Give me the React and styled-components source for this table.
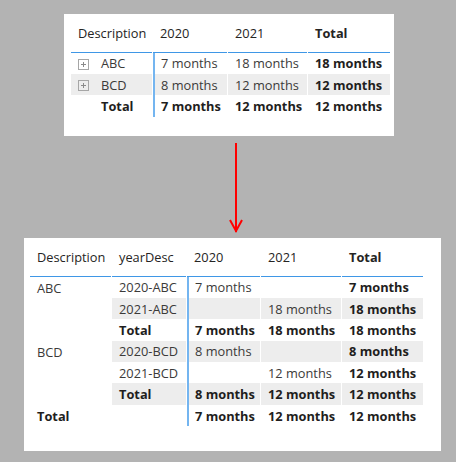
import styled, { createGlobalStyle } from 'styled-components';

const Global = createGlobalStyle`
  body {
    margin: 0;
    background: #b3b3b3;
    font-family: "Open Sans", "Noto Sans", sans-serif;
  }
`;

const Canvas = styled.div`
  display: flex;
  flex-direction: column;
  padding-top: 14px;
  width: 456px;
  height: 462px;
  box-sizing: border-box;
`;

const Panel = styled.div`
  background: #fff;
  margin-left: ${(p) => p.$left}px;
  width: ${(p) => p.$width}px;
  height: ${(p) => p.$height}px;
  padding: 9px 0 0 ${(p) => p.$pad}px;
  box-sizing: border-box;
`;

const Grid = styled.div`
  display: grid;
  grid-template-columns: ${(p) => p.$cols};
  grid-template-rows: 29.5px;
  grid-auto-rows: 21.4px;
  column-gap: 1px;
  font-size: 12.8px;
`;

const Head = styled.div`
  box-sizing: border-box;
  padding: 0 0 8px 7px;
  line-height: 20px;
  color: #252423;
  font-weight: ${(p) => (p.$bold ? 700 : 400)};
  border-bottom: 1.5px solid #3f97e6;
  white-space: nowrap;
`;

const Row = styled.div`
  display: contents;
`;

const Cell = styled.div`
  display: flex;
  align-items: ${(p) => (p.$top ? 'flex-start' : 'center')};
  gap: 12px;
  padding-left: ${(p) => (p.$line ? 6 : p.$indent ? 30 : 7)}px;
  padding-top: ${(p) => (p.$top ? 2 : 0)}px;
  background: ${(p) => (p.$shade ? '#ededed' : '#fff')};
  border-left: ${(p) => (p.$line ? '2px solid #74b5f0' : 'none')};
  color: ${(p) => (p.$bold ? '#1f1e1d' : '#3b3a39')};
  font-weight: ${(p) => (p.$bold ? 700 : 400)};
  white-space: nowrap;
  grid-row: ${(p) => p.$span || 'auto'};
`;

const Expand = styled.span`
  width: 11px;
  height: 11px;
  box-sizing: border-box;
  border: 1px solid #a6a6a6;
  position: relative;
  margin-top: 2px;
  flex: none;

  &::before,
  &::after {
    content: '';
    position: absolute;
    background: #8a8a8a;
  }
  &::before {
    left: 2px;
    right: 2px;
    top: 4px;
    height: 1px;
  }
  &::after {
    top: 2px;
    bottom: 2px;
    left: 4px;
    width: 1px;
  }
`;

const ArrowBox = styled.svg`
  display: block;
  margin-left: 226px;
  flex: none;
`;

const topRows = [
  { name: 'ABC', a: '7 months', b: '18 months', t: '18 months', icon: true },
  { name: 'BCD', a: '8 months', b: '12 months', t: '12 months', icon: true, shade: true },
  { name: 'Total', a: '7 months', b: '12 months', t: '12 months', bold: true },
];

const bottomRows = [
  { y: '2020-ABC', a: '7 months', b: '', t: '7 months' },
  { y: '2021-ABC', a: '', b: '18 months', t: '18 months', shade: true },
  { y: 'Total', a: '7 months', b: '18 months', t: '18 months', bold: true },
  { y: '2020-BCD', a: '8 months', b: '', t: '8 months', shade: true },
  { y: '2021-BCD', a: '', b: '12 months', t: '12 months' },
  { y: 'Total', a: '8 months', b: '12 months', t: '12 months', bold: true, shade: true },
];

function TopTable() {
  return (
    <Grid $cols="81px 74px 79px 82px">
      <Head>Description</Head>
      <Head>2020</Head>
      <Head>2021</Head>
      <Head $bold>Total</Head>
      {topRows.map((r) => (
        <Row key={r.name}>
          <Cell $shade={r.shade} $bold={r.bold} $indent={!r.icon}>
            {r.icon && <Expand />}
            {r.name}
          </Cell>
          <Cell $shade={r.shade} $bold={r.bold} $line>{r.a}</Cell>
          <Cell $shade={r.shade} $bold={r.bold}>{r.b}</Cell>
          <Cell $shade={r.shade} $bold>{r.t}</Cell>
        </Row>
      ))}
    </Grid>
  );
}

function BottomTable() {
  return (
    <Grid $cols="81px 74px 73px 80px 81px">
      <Head>Description</Head>
      <Head>yearDesc</Head>
      <Head>2020</Head>
      <Head>2021</Head>
      <Head $bold>Total</Head>
      <Cell $span="2 / span 3" $top>ABC</Cell>
      <Cell $span="5 / span 3" $top>BCD</Cell>
      {bottomRows.map((r, i) => (
        <Row key={i}>
          <Cell style={{ gridColumn: 2, gridRow: i + 2 }} $shade={r.shade} $bold={r.bold}>{r.y}</Cell>
          <Cell style={{ gridColumn: 3, gridRow: i + 2 }} $shade={r.shade} $bold={r.bold} $line>{r.a}</Cell>
          <Cell style={{ gridColumn: 4, gridRow: i + 2 }} $shade={r.shade} $bold={r.bold}>{r.b}</Cell>
          <Cell style={{ gridColumn: 5, gridRow: i + 2 }} $shade={r.shade} $bold>{r.t}</Cell>
        </Row>
      ))}
      <Cell $bold>Total</Cell>
      <Cell />
      <Cell $bold $line>7 months</Cell>
      <Cell $bold>12 months</Cell>
      <Cell $bold>12 months</Cell>
    </Grid>
  );
}

export default function App() {
  return (
    <>
      <Global />
      <Canvas>
        <Panel $left={64} $width={330} $height={122} $pad={7}>
          <TopTable />
        </Panel>
        <ArrowBox width="20" height="102" viewBox="0 0 20 102">
          <line x1="10" y1="7" x2="10" y2="96" stroke="#ff0000" strokeWidth="2" />
          <polyline points="4,84 10,95 16,84" fill="none" stroke="#ff0000" strokeWidth="2" />
        </ArrowBox>
        <Panel $left={24} $width={417} $height={213} $pad={6}>
          <BottomTable />
        </Panel>
      </Canvas>
    </>
  );
}
